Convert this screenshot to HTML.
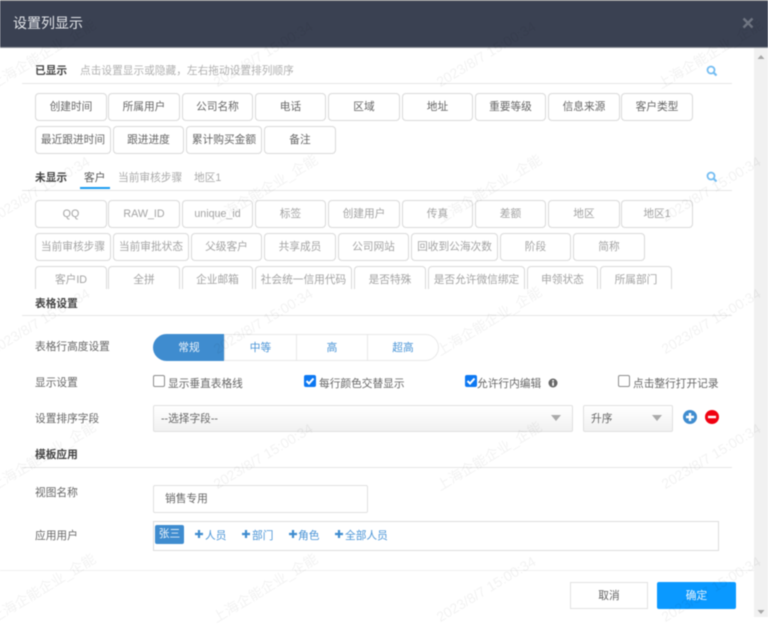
<!DOCTYPE html>
<html lang="zh"><head><meta charset="utf-8"><title>设置列显示</title>
<style>
*{box-sizing:border-box}
html,body{margin:0;padding:0;background:#fff}
body{position:relative;width:768px;height:617px;overflow:hidden;font-family:"Liberation Sans","Noto Sans CJK SC",sans-serif;font-size:10.7px;color:#666}
#b{position:absolute;left:0;top:0;width:768px;height:617px;filter:blur(.5px)}
.a,.t,.u,.l,.w,.h{position:absolute}
.t,.u{height:28px;line-height:27px;border:1px solid #d9d9d9;border-radius:4px;text-align:center;white-space:nowrap;background:#fff;overflow:hidden}
.t{color:#666}.u{color:#a3a3a3}
.l{left:22px;width:710px;height:1px;background:#e6e6e6}
.h{font-weight:bold;color:#444;line-height:14px;white-space:nowrap}
.a{line-height:14px;white-space:nowrap}
.s{position:absolute;top:334px;height:27px;line-height:26px;text-align:center;color:#4a94d6;border:1px solid #e8e8e8;background:#fff}
.c{position:absolute;top:375px;width:12px;height:12px;border:1px solid #8c8c8c;border-radius:2px;background:#fff}
.k{position:absolute;top:375px;width:12px;height:12px;border-radius:2px;background:#0d78f2}
.sel{position:absolute;top:405px;height:27px;border:1px solid #e0e0e0;border-radius:2px;background:linear-gradient(#fff,#f1f1f1);line-height:26px;color:#666;padding-left:7px}
.ar{position:absolute;top:9px;width:0;height:0;border-left:5px solid transparent;border-right:5px solid transparent;border-top:6px solid #aaa}
.w{font-size:14px;line-height:16px;color:rgba(0,0,0,.055);white-space:nowrap;transform:translate(-50%,-50%) rotate(-31deg);pointer-events:none}
</style></head><body><div id="b">
<div class="a" style="left:0;top:0;width:768px;height:48px;background:#3a4152;border-top:1px solid #8b8b8b;border-bottom:1px solid #8e929a"></div>
<div class="a" style="left:13px;top:14px;font-size:14px;line-height:18px;color:#e4e6ea">设置列显示</div>
<svg class="a" style="left:742px;top:17px" width="12" height="12" viewBox="0 0 12 12"><path d="M1.5 1.5L10.5 10.5M10.5 1.5L1.5 10.5" stroke="#6f7582" stroke-width="2.4"/></svg>
<div class="a" style="left:754px;top:48px;width:14px;height:569px;background:#f1f1f1"></div>
<svg class="a" style="left:757px;top:54px" width="8" height="6"><path d="M4 1L7.500 5H.5z" fill="#a8a8a8"/></svg>
<svg class="a" style="left:757px;top:609px" width="8" height="6"><path d="M.5 1H7.500L4 5z" fill="#a8a8a8"/></svg>

<div class="h" style="left:35px;top:64px">已显示</div>
<div class="a" style="left:80px;top:64px;color:#b0b0b0">点击设置显示或隐藏，左右拖动设置排列顺序</div>
<svg class="a" style="left:706px;top:65px" width="12" height="12" viewBox="0 0 12 12"><circle cx="5" cy="5" r="3.500" fill="none" stroke="#74bdf2" stroke-width="1.800"/><path d="M7.500 7.500L10.500 10.500" stroke="#74bdf2" stroke-width="2.200"/></svg>
<div class="l" style="top:83px"></div>

<div class="t" style="left:35px;top:93px;width:72px">创建时间</div>
<div class="t" style="left:108px;top:93px;width:72px">所属用户</div>
<div class="t" style="left:182px;top:93px;width:71px">公司名称</div>
<div class="t" style="left:255px;top:93px;width:71px">电话</div>
<div class="t" style="left:328px;top:93px;width:72px">区域</div>
<div class="t" style="left:402px;top:93px;width:71px">地址</div>
<div class="t" style="left:475px;top:93px;width:71px">重要等级</div>
<div class="t" style="left:548px;top:93px;width:72px">信息来源</div>
<div class="t" style="left:621px;top:93px;width:72px">客户类型</div>
<div class="t" style="left:35px;top:126px;width:76px">最近跟进时间</div>
<div class="t" style="left:113px;top:126px;width:71px">跟进进度</div>
<div class="t" style="left:186px;top:126px;width:76px">累计购买金额</div>
<div class="t" style="left:264px;top:126px;width:72px">备注</div>

<div class="h" style="left:35px;top:171px">未显示</div>
<div class="a" style="left:84px;top:171px;color:#555">客户</div>
<div class="a" style="left:80px;top:187px;width:30px;height:2px;background:#1a9cf0"></div>
<div class="a" style="left:118px;top:171px;color:#aaa">当前审核步骤</div>
<div class="a" style="left:194px;top:171px;color:#aaa">地区1</div>
<svg class="a" style="left:706px;top:171px" width="12" height="12" viewBox="0 0 12 12"><circle cx="5" cy="5" r="3.500" fill="none" stroke="#74bdf2" stroke-width="1.800"/><path d="M7.500 7.500L10.500 10.500" stroke="#74bdf2" stroke-width="2.200"/></svg>
<div class="l" style="top:190px"></div>

<div class="u" style="left:35px;top:200px;width:72px">QQ</div>
<div class="u" style="left:108px;top:200px;width:72px">RAW_ID</div>
<div class="u" style="left:182px;top:200px;width:71px">unique_id</div>
<div class="u" style="left:255px;top:200px;width:71px">标签</div>
<div class="u" style="left:328px;top:200px;width:72px">创建用户</div>
<div class="u" style="left:402px;top:200px;width:71px">传真</div>
<div class="u" style="left:475px;top:200px;width:71px">差额</div>
<div class="u" style="left:548px;top:200px;width:72px">地区</div>
<div class="u" style="left:621px;top:200px;width:72px">地区1</div>
<div class="u" style="left:35px;top:233px;width:76px">当前审核步骤</div>
<div class="u" style="left:113px;top:233px;width:76px">当前审批状态</div>
<div class="u" style="left:191px;top:233px;width:71px">父级客户</div>
<div class="u" style="left:264px;top:233px;width:72px">共享成员</div>
<div class="u" style="left:338px;top:233px;width:71px">公司网站</div>
<div class="u" style="left:411px;top:233px;width:87px">回收到公海次数</div>
<div class="u" style="left:500px;top:233px;width:71px">阶段</div>
<div class="u" style="left:573px;top:233px;width:72px">简称</div>
<div class="a" style="left:0;top:266px;width:754px;height:23px;overflow:hidden">
<div class="u" style="left:35px;top:0;width:72px">客户ID</div>
<div class="u" style="left:108px;top:0;width:72px">全拼</div>
<div class="u" style="left:182px;top:0;width:71px">企业邮箱</div>
<div class="u" style="left:255px;top:0;width:97px">社会统一信用代码</div>
<div class="u" style="left:354px;top:0;width:72px">是否特殊</div>
<div class="u" style="left:428px;top:0;width:97px">是否允许微信绑定</div>
<div class="u" style="left:527px;top:0;width:71px">申领状态</div>
<div class="u" style="left:600px;top:0;width:72px">所属部门</div>
</div>

<div class="h" style="left:35px;top:297px">表格设置</div>
<div class="l" style="top:315px"></div>

<div class="a" style="left:35px;top:340px">表格行高度设置</div>
<div class="s" style="left:153px;width:72px;background:#3f8ccf;border-color:#3f8ccf;color:#e8f1fa;border-radius:14px 0 0 14px">常规</div>
<div class="s" style="left:224px;width:73px">中等</div>
<div class="s" style="left:296px;width:72px">高</div>
<div class="s" style="left:367px;width:72px;border-radius:0 14px 14px 0">超高</div>

<div class="a" style="left:35px;top:376px">显示设置</div>
<div class="c" style="left:153px"></div>
<div class="a" style="left:168px;top:377px">显示垂直表格线</div>
<div class="k" style="left:304px"><svg style="display:block" width="12" height="12"><path d="M2.500 6L5 8.500L9.500 3.500" fill="none" stroke="#fff" stroke-width="2"/></svg></div>
<div class="a" style="left:319px;top:377px">每行颜色交替显示</div>
<div class="k" style="left:465px"><svg style="display:block" width="12" height="12"><path d="M2.500 6L5 8.500L9.500 3.500" fill="none" stroke="#fff" stroke-width="2"/></svg></div>
<div class="a" style="left:477px;top:377px">允许行内编辑</div>
<svg class="a" style="left:548px;top:378px" width="10" height="10"><circle cx="5" cy="5" r="4.500" fill="#666"/><rect x="4.200" y="4.200" width="1.700" height="3.600" fill="#fff"/><rect x="4.200" y="2.100" width="1.700" height="1.400" fill="#fff"/></svg>
<div class="c" style="left:618px"></div>
<div class="a" style="left:633px;top:377px">点击整行打开记录</div>

<div class="a" style="left:35px;top:412px">设置排序字段</div>
<div class="sel" style="left:153px;width:420px">--选择字段--<span class="ar" style="left:397px"></span></div>
<div class="sel" style="left:583px;width:90px">升序<span class="ar" style="left:68px"></span></div>
<svg class="a" style="left:682px;top:409px" width="16" height="16"><circle cx="8" cy="8" r="7" fill="#3f8ccf"/><path d="M8 4V12M4 8H12" stroke="#fff" stroke-width="2.400"/></svg>
<svg class="a" style="left:704px;top:409px" width="16" height="16"><circle cx="8" cy="8" r="7" fill="#f00010"/><path d="M4 8H12" stroke="#fff" stroke-width="2.400"/></svg>

<div class="h" style="left:35px;top:448px">模板应用</div>
<div class="l" style="top:467px"></div>

<div class="a" style="left:35px;top:486px">视图名称</div>
<div class="a" style="left:153px;top:485px;width:215px;height:28px;border:1px solid #e0e0e0;border-radius:2px;line-height:27px;padding-left:11px">销售专用</div>

<div class="a" style="left:35px;top:529px">应用用户</div>
<div class="a" style="left:153px;top:521px;width:566px;height:30px;border:1px solid #ddd"></div>
<div class="a" style="left:155px;top:525px;width:29px;height:19px;line-height:19px;text-align:center;background:#3f8ccf;color:#eef5fb;border-radius:2px">张三</div>
<svg class="a" style="left:194px;top:529px" width="10" height="10"><path d="M5 1V9M1 5H9" stroke="#3f8ccf" stroke-width="2.200"/></svg>
<div class="a" style="left:205px;top:529px;color:#4a94d6">人员</div>
<svg class="a" style="left:241px;top:529px" width="10" height="10"><path d="M5 1V9M1 5H9" stroke="#3f8ccf" stroke-width="2.200"/></svg>
<div class="a" style="left:252px;top:529px;color:#4a94d6">部门</div>
<svg class="a" style="left:288px;top:529px" width="10" height="10"><path d="M5 1V9M1 5H9" stroke="#3f8ccf" stroke-width="2.200"/></svg>
<div class="a" style="left:298px;top:529px;color:#4a94d6">角色</div>
<svg class="a" style="left:334px;top:529px" width="10" height="10"><path d="M5 1V9M1 5H9" stroke="#3f8ccf" stroke-width="2.200"/></svg>
<div class="a" style="left:345px;top:529px;color:#4a94d6">全部人员</div>

<div class="a" style="left:0;top:570px;width:754px;height:1px;background:#f0f0f0"></div>
<div class="a" style="left:570px;top:582px;width:78px;height:27px;border:1px solid #e2e2e2;line-height:26px;text-align:center;background:#fff">取消</div>
<div class="a" style="left:657px;top:582px;width:79px;height:27px;border-radius:2px;line-height:28px;text-align:center;background:#0a99ff;color:#eaf6ff">确定</div>

<div class="w" style="left:43px;top:54px">上海企能企业_企能</div>
<div class="w" style="left:263px;top:54px">2023/8/7 15:00:34</div>
<div class="w" style="left:486px;top:54px">2023/8/7 15:00:34</div>
<div class="w" style="left:710px;top:54px">上海企能企业_企能</div>
<div class="w" style="left:40px;top:189px">2023/8/7 15:00:34</div>
<div class="w" style="left:265px;top:189px">上海企能企业_企能</div>
<div class="w" style="left:489px;top:189px">上海企能企业_企能</div>
<div class="w" style="left:711px;top:189px">2023/8/7 15:00:34</div>
<div class="w" style="left:40px;top:321px">2023/8/7 15:00:34</div>
<div class="w" style="left:263px;top:321px">2023/8/7 15:00:34</div>
<div class="w" style="left:489px;top:321px">上海企能企业_企能</div>
<div class="w" style="left:711px;top:321px">2023/8/7 15:00:34</div>
<div class="w" style="left:43px;top:456px">上海企能企业_企能</div>
<div class="w" style="left:263px;top:456px">2023/8/7 15:00:34</div>
<div class="w" style="left:489px;top:456px">上海企能企业_企能</div>
<div class="w" style="left:711px;top:456px">2023/8/7 15:00:34</div>
<div class="w" style="left:43px;top:588px">上海企能企业_企能</div>
<div class="w" style="left:265px;top:588px">上海企能企业_企能</div>
<div class="w" style="left:486px;top:589px">2023/8/7 15:00:34</div>
<div class="w" style="left:711px;top:589px">2023/8/7 15:00:34</div>
</div></body></html>
